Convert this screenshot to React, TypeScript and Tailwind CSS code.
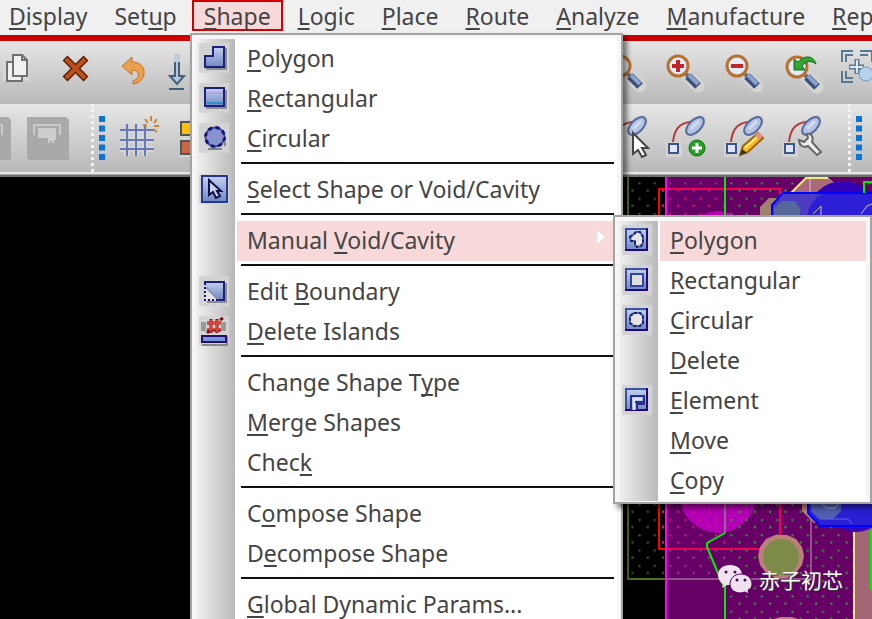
import type { ReactNode } from 'react'
import clsx from 'clsx'

type Item = { label: string; icon?: ReactNode; active?: boolean; children?: Entry[] }
type Entry = Item | 'separator'

/// Menu icons ///

function Tile({ children }: { children: ReactNode }) {
  return (
    <svg className="size-[30px] shrink-0 bg-[#d3d3d3]" viewBox="0 0 30 30" aria-hidden="true">
      <defs>
        <linearGradient id="face" x1="0" y1="0" x2="0" y2="1">
          <stop offset="0" stopColor="#c4d0ee" />
          <stop offset="1" stopColor="#7188c4" />
        </linearGradient>
      </defs>
      {children}
    </svg>
  )
}

const polygonIcon = (
  <Tile>
    <path d="M7 26h20V5" fill="none" stroke="#8c8c94" strokeWidth="2" />
    <path d="M6 13h8V4h11v20H6z" fill="url(#face)" stroke="#1c2078" strokeWidth="2" />
  </Tile>
)

const rectIcon = (
  <Tile>
    <path d="M7 25h20V7" fill="none" stroke="#8c8c94" strokeWidth="2" />
    <rect x="6" y="5" width="19" height="18" fill="url(#face)" stroke="#1c2078" strokeWidth="2" />
    <path d="M8 10h16" stroke="#b98ad8" />
    <path d="M8 20h16" stroke="#2d8fc4" strokeWidth="2" />
  </Tile>
)

const circleIcon = (
  <Tile>
    <path d="M9 26h14M26 19v4" stroke="#808088" strokeWidth="2" />
    <circle cx="16" cy="14" r="9.5" fill="#8494cc" stroke="#3c4a90" strokeWidth="2" />
    <circle cx="16" cy="14" r="9.5" fill="none" stroke="#14147a" strokeWidth="3" strokeDasharray="4 3.5" />
    <path d="M7 14h18" stroke="#a08ad0" />
  </Tile>
)

const selectIcon = (
  <Tile>
    <rect x="3" y="2" width="25" height="26" fill="url(#face)" stroke="#26388c" strokeWidth="2" />
    <path d="M10 6v15l4-3 3 6 4-2-3-5h4z" fill="#c9d0e8" stroke="#101050" strokeWidth="2" />
  </Tile>
)

const editIcon = (
  <Tile>
    <path d="M8 26h19V7" fill="none" stroke="#8c8c94" strokeWidth="2" />
    <path d="M6 6h19v17h-8L6 12z" fill="url(#face)" />
    <path d="M6 12l12 12H6z" fill="#e4e4e4" />
    <path d="M5 6h20v18h-7" fill="none" stroke="#1c2078" strokeWidth="2" />
    <path d="M6 7v17h13" fill="none" stroke="#14147a" strokeWidth="2" strokeDasharray="2 2" />
    <path d="M8 12l11 11" stroke="#8494a4" strokeWidth="2" strokeDasharray="2 1" />
  </Tile>
)

const islandsIcon = (
  <Tile>
    <path d="M2 6h5v9H2zM22 6h5v9h-5z" fill="#999" />
    <path d="M8 7h14M8 14h14M12 3v14M18 3v14M8 17l3-3M21 4l3-2" stroke="#7c1818" strokeWidth="3" />
    <path d="M8 7h14M8 13h14M12 4v12M18 4v12" stroke="#d84438" strokeWidth="2" />
    <path d="M3 29h25v-9" fill="none" stroke="#888" strokeWidth="2" />
    <rect x="3" y="20" width="24" height="6" fill="#7898e0" stroke="#26106e" strokeWidth="2" />
  </Tile>
)

function VoidTile({ children }: { children: ReactNode }) {
  return (
    <Tile>
      <rect x="4" y="4" width="21" height="21" fill="url(#face)" stroke="#3a50a0" strokeWidth="2" />
      <path d="M25 3v22H3" fill="none" stroke="#200a78" strokeWidth="2" />
      {children}
    </Tile>
  )
}

const voidPolygonIcon = (
  <VoidTile>
    <path d="M8 12l4-3 2-2h4l2 3 1 2v6l-2 3-4 1-2-2v-4H9z" fill="#e4e4e4" stroke="#5468a8" strokeWidth="2" />
    <path d="M8 12l4-3 2-2h4l2 3 1 2v6l-2 3-4 1-2-2v-4H9z" fill="none" stroke="#182070" strokeWidth="2" strokeDasharray="3 2" />
  </VoidTile>
)

const voidRectIcon = (
  <VoidTile>
    <rect x="9" y="9" width="12" height="12" fill="#e0e0e0" stroke="#34469a" strokeWidth="2" />
  </VoidTile>
)

const voidCircleIcon = (
  <VoidTile>
    <path d="M12 8h6l3 3v7l-3 3h-6l-4-3v-7z" fill="#e4e4e4" stroke="#5468a8" strokeWidth="2" />
    <path d="M12 8h6l3 3v7l-3 3h-6l-4-3v-7z" fill="none" stroke="#182070" strokeWidth="2" strokeDasharray="3 2" />
  </VoidTile>
)

const voidElementIcon = (
  <VoidTile>
    <path d="M9 25V11h13v8h-7v6" fill="none" stroke="#24308c" strokeWidth="2" />
    <path d="M12 25V14h8" fill="none" stroke="#dfe4f0" strokeWidth="3" />
    <path d="M13 17h8" stroke="#24308c" strokeWidth="2" />
  </VoidTile>
)

/// Menu data, the underlined letter follows "&" ///

const menuBar = ['&Display', 'Set&up', '&Shape', '&Logic', '&Place', '&Route', '&Analyze', '&Manufacture', '&Report']

const voidMenu: Entry[] = [
  { label: '&Polygon', icon: voidPolygonIcon, active: true },
  { label: '&Rectangular', icon: voidRectIcon },
  { label: '&Circular', icon: voidCircleIcon },
  { label: '&Delete' },
  { label: '&Element', icon: voidElementIcon },
  { label: '&Move' },
  { label: '&Copy' },
]

const shapeMenu: Entry[] = [
  { label: '&Polygon', icon: polygonIcon },
  { label: '&Rectangular', icon: rectIcon },
  { label: '&Circular', icon: circleIcon },
  'separator',
  { label: '&Select Shape or Void/Cavity', icon: selectIcon },
  'separator',
  { label: 'Manual &Void/Cavity', active: true, children: voidMenu },
  'separator',
  { label: 'Edit &Boundary', icon: editIcon },
  { label: '&Delete Islands', icon: islandsIcon },
  'separator',
  { label: 'Change Shape T&ype' },
  { label: '&Merge Shapes' },
  { label: 'Chec&k' },
  'separator',
  { label: 'C&ompose Shape' },
  { label: 'D&ecompose Shape' },
  'separator',
  { label: '&Global Dynamic Params...' },
]

function Mnemonic({ text }: { text: string }) {
  const [before, after] = text.split('&')
  return (
    <>
      {before}
      <u className="decoration-[2px] underline-offset-[3px] [text-decoration-skip-ink:none]">{after[0]}</u>
      {after.slice(1)}
    </>
  )
}

function Menu({ entries, className }: { entries: Entry[]; className: string }) {
  return (
    <div className={clsx('absolute border-2 border-[#a3a3a3] bg-[#f6f6f6] px-1 pt-1 pb-px shadow-[4px_4px_5px_rgba(0,0,0,0.5)]', className)}>
      <ul role="menu" className="bg-[linear-gradient(to_right,#f0f0f0,#b9b9b9_39px,#fff_39px)]">
        {entries.map((entry, i) =>
          entry === 'separator' ? (
            <li key={i} role="separator" className="flex h-[11px] items-center pr-[3px] pb-1 pl-[45px]">
              <span className="h-[2px] w-full bg-[#111]" />
            </li>
          ) : (
            <li key={i} role="none" className="relative">
              <button type="button" role="menuitem" className="flex h-10 w-full items-center gap-[5px] text-left">
                <span className="flex w-9 shrink-0 justify-center pb-0.5">{entry.icon}</span>
                <span className={clsx('flex h-10 flex-1 items-center justify-between px-[10px] pb-0.5 whitespace-nowrap', entry.active && 'bg-[#f8d9d9]')}>
                  <span>
                    <Mnemonic text={entry.label} />
                  </span>
                  {entry.children && (
                    <svg className="mr-[2px] mb-1.5 h-3.5 w-2" viewBox="0 0 8 14" aria-hidden="true">
                      <path d="M0 0l8 7-8 7z" fill="#fff" />
                    </svg>
                  )}
                </span>
              </button>
              {entry.children && <Menu entries={entry.children} className="-top-1.5 left-full z-10 -ml-1 w-[259px]" />}
            </li>
          ),
        )}
      </ul>
    </div>
  )
}

/// Toolbar ///

function Tool({ label, narrow, children }: { label: string; narrow?: boolean; children: ReactNode }) {
  return (
    <button type="button" aria-label={label} className={clsx('flex shrink-0 items-center justify-center', narrow ? 'w-[30px]' : 'w-[58px]')}>
      <svg className="size-10 shrink-0 overflow-visible" viewBox="0 0 40 40" fill="none">
        {children}
      </svg>
    </button>
  )
}

function Lens({ x = 13, y = 16, children }: { x?: number; y?: number; children?: ReactNode }) {
  return (
    <>
      <path d={`M${x + 10} ${y + 10}L${x + 20} ${y + 20}`} stroke="#d4d4d4" strokeWidth="13" strokeLinecap="round" />
      <path d={`M${x + 8} ${y + 8}l4 4`} stroke="#6a6f80" strokeWidth="4" />
      <path d={`M${x + 10} ${y + 10}l10 10`} stroke="#3d5078" strokeWidth="8" />
      <path d={`M${x + 11} ${y + 9}l9 9`} stroke="#8ba3cf" strokeWidth="4" />
      <circle cx={x} cy={y} r="10" fill="#e3eaf8" stroke="#b8702c" strokeWidth="3" />
      {children}
    </>
  )
}

function Via({ children }: { children: ReactNode }) {
  return (
    <>
      <ellipse cx="28" cy="8" rx="13" ry="8" transform="rotate(-45 28 8)" fill="#d4d4d4" />
      <path d="M-1 24h16v15H-1z" fill="#d4d4d4" />
      <path d="M6 24C7 12 13 5 23 4" stroke="#b23c3c" strokeWidth="2" />
      <ellipse cx="28" cy="8" rx="11" ry="6" transform="rotate(-45 28 8)" fill="#b4c3e4" stroke="#566a9c" strokeWidth="2" />
      <path d="M24 11l8-8" stroke="#d0daf0" strokeWidth="3" />
      <rect x="2" y="26" width="9" height="9" fill="#dfe6f8" stroke="#3d548c" strokeWidth="2" />
      {children}
    </>
  )
}

function Handle() {
  return (
    <span className="mx-[5px] flex shrink-0 gap-[5px]">
      <span className="border-l-[3px] border-dotted border-[#f4f4f4]" />
      <svg className="w-[6px] self-center" viewBox="0 0 6 44" aria-hidden="true">
        <path d="M3 0v44" stroke="#0a74da" strokeWidth="6" strokeDasharray="6 3.5" />
      </svg>
    </span>
  )
}

function DisabledSave() {
  return (
    <>
      <path d="M0 -1h39l3 3v40H2l-2-2z" fill="#a9a9a9" />
      <path d="M7 17V7h26v10" stroke="#c9c9c9" strokeWidth="2" />
      <path d="M11 10h18v12h-2v3h-2v-2h-2v2h-2v-5H11z" fill="#cdcdcd" />
    </>
  )
}

function Toolbars() {
  return (
    <div className="bg-[#bdbdbd]">
      <div className="-ml-3 flex h-[63px] overflow-hidden bg-linear-to-b from-[#e6e6e6] to-[#b9b9b9] pb-[5px]">
        <Tool label="Copy">
          <path d="M6 9h26v22H6z" fill="#d8d8d8" />
          <path d="M10 12h7v14h8v5H10z" fill="#f0f0f0" stroke="#707070" strokeWidth="2" />
          <path d="M16 5h9l5 5v16H16z" fill="#f0f0f0" stroke="#707070" strokeWidth="2" />
          <path d="M25 5v5h5" stroke="#707070" strokeWidth="2" />
        </Tool>
        <Tool label="Delete">
          <path d="M10 8l21 21M31 8L10 29" stroke="#5e1c06" strokeWidth="7" />
          <path d="M11 9l19 19M30 9L11 28" stroke="#c05018" strokeWidth="4" />
        </Tool>
        <Tool label="Undo">
          <path d="M9 16l10-9v5c8 0 13 5 12 12-1 6-5 9-11 10v-3c5-2 6-5 5-8-1-2-3-3-6-3v5z" fill="#e8a050" stroke="#c27328" />
        </Tool>
        <Tool label="Step" narrow>
          <path d="M18 8v18h-5l7 8 7-8h-5V8" fill="#b8c8d8" stroke="#42607e" strokeWidth="2" />
          <path d="M17 4h6v8h-6z" fill="#c2ccd6" />
          <path d="M12 39h15" stroke="#42607e" strokeWidth="2" />
        </Tool>
        <div className="w-[406px] shrink-0" />
        <Tool label="Zoom fit">
          <Lens>
            <path d="M13 11v11" stroke="#c22828" strokeWidth="4" />
          </Lens>
        </Tool>
        <Tool label="Zoom in">
          <Lens>
            <path d="M13 10v12M7 16h12" stroke="#c22828" strokeWidth="4" />
          </Lens>
        </Tool>
        <Tool label="Zoom out">
          <Lens x={14}>
            <path d="M8 16h12" stroke="#c22828" strokeWidth="4" />
          </Lens>
        </Tool>
        <Tool label="Zoom previous">
          <Lens x={16} y={17}>
            <path d="M13 9v11h11l-3-4c4-5 8-6 14-2-2-8-11-10-18-2z" fill="#35a535" stroke="#126c18" />
          </Lens>
        </Tool>
        <Tool label="Zoom to selection">
          <path d="M3 12V1h11M7 12V5h7M21 1h12M21 5h8M3 21v11h11M7 21v7h7M33 1v11" stroke="#587994" strokeWidth="2" />
          <path d="M18 9v15M10 17h15" stroke="#587994" strokeWidth="5" />
          <path d="M18 10v13M11 17h13" stroke="#dfe8f0" strokeWidth="2" />
          <circle cx="27" cy="24" r="7" fill="#b6d2ec" stroke="#7299bd" />
        </Tool>
      </div>
      <div className="-ml-10 flex h-[68px] overflow-hidden bg-linear-to-b from-[#e6e6e6] to-[#b9b9b9]">
        <Tool label="Save layout">
          <DisabledSave />
        </Tool>
        <Tool label="Save screen">
          <DisabledSave />
        </Tool>
        <div className="w-[10px] shrink-0" />
        <Handle />
        <Tool label="Grid">
          <path d="M8 6v32M17 6v32M26 6v32M1 12h34M1 22h34M1 31h34" stroke="#d4d4d4" strokeWidth="6" />
          <path d="M8 6v32M17 6v32M26 6v32M1 12h34M1 22h34M1 31h34" stroke="#6679b4" strokeWidth="2" />
          <path d="M32 3v-5M35 5l3-4M35 8h5M34 11l4 3M29 5l-3-4M28 8l-4-1" stroke="#c8843a" strokeWidth="2" />
        </Tool>
        <Tool label="Colors">
          <path d="M3 2h16v37H3z" fill="#d4d4d4" />
          <rect x="4" y="4" width="14" height="13" fill="#fcc010" stroke="#555" strokeWidth="2" />
          <rect x="4" y="23" width="14" height="13" fill="#cc6644" stroke="#555" strokeWidth="2" />
        </Tool>
        <div className="w-[374px] shrink-0" />
        <Tool label="Select connection">
          <Via>
            <path d="M24 15v21l5-4 4 7 4-2-4-7h6z" fill="#fff" stroke="#444" strokeWidth="2" />
          </Via>
        </Tool>
        <Tool label="Add connection">
          <Via>
            <circle cx="30" cy="30" r="8" fill="#25a025" stroke="#147014" />
            <path d="M30 25v10M25 30h10" stroke="#fff" strokeWidth="3" />
          </Via>
        </Tool>
        <Tool label="Edit connection">
          <Via>
            <path d="M15 37l3-9 15-13 5 5-15 14z" fill="#f4b81c" stroke="#9a6410" strokeWidth="2" />
            <path d="M20 30l14-13" stroke="#fff07c" strokeWidth="2" />
            <path d="M30 17l4-3 4 4-4 4z" fill="#e09080" />
            <path d="M15 37l2-6 5 4z" fill="#333" />
          </Via>
        </Tool>
        <Tool label="Connection settings">
          <Via>
            <path d="M24 16l1 4-4 4-5-2c0 6 5 8 9 6l9 9 4-3-9-10c2-5-1-9-5-8z" fill="#eee" stroke="#666" strokeWidth="2" />
          </Via>
        </Tool>
        <div className="w-[11px] shrink-0" />
        <Handle />
      </div>
      <div className="h-[5px] border-t-2 border-b-2 border-t-[#e8e8e8] border-b-[#707070] bg-[#a8a8a8]" />
    </div>
  )
}

/// Board view ///

function Board() {
  return (
    <svg className="size-full" viewBox="0 177 872 442" preserveAspectRatio="xMinYMin slice" aria-label="Board layout" role="img">
      <defs>
        <g id="dots">
          <path d="M10 6h2v2h-2zM3 13h2v2H3z" />
        </g>
        <pattern id="dots-olive" x="628.5" y="176.5" width="15.3" height="15.3" patternUnits="userSpaceOnUse">
          <use href="#dots" fill="#41651f" />
        </pattern>
        <pattern id="dots-pink" x="628.5" y="176.5" width="15.3" height="15.3" patternUnits="userSpaceOnUse">
          <use href="#dots" fill="#e01c78" />
        </pattern>
        <pattern id="dots-grey" x="628.5" y="176.5" width="15.3" height="15.3" patternUnits="userSpaceOnUse">
          <use href="#dots" fill="#8a4c8a" />
        </pattern>
        <pattern id="dots-green" x="628.5" y="176.5" width="15.3" height="15.3" patternUnits="userSpaceOnUse">
          <use href="#dots" fill="#2fa42f" />
        </pattern>
      </defs>
      <path d="M666 177h206v442H666z" fill="#660066" />
      <circle cx="718" cy="249" r="38" fill="#b400b4" />
      <circle cx="718" cy="495" r="38" fill="#b400b4" />
      <path d="M628 177h38v402h-38z" fill="url(#dots-olive)" />
      <path d="M666 177h59v12h-59zM666 549h59v30h-59z" fill="url(#dots-grey)" />
      <path d="M660 190h65v359h-65z" fill="url(#dots-pink)" />
      <path d="M725 177h147v442H725z" fill="url(#dots-green)" />
      <g fill="none" strokeWidth="2">
        <path d="M628 177v402h38" stroke="#4b7028" />
        <path d="M666 579h145v-62" stroke="#94518b" />
        <path d="M666 189h-7v360h7" stroke="#ff0000" />
        <path d="M666 189h114v360H666" stroke="#f00050" />
        <path d="M666 177v442" stroke="#ff00ff" />
        <path d="M725 500v33" stroke="#8e6a8e" />
        <path d="M725 177v40M725 533l-18 10v4l15 36 3 4v32" stroke="#00f000" />
      </g>
      <path d="M775 535h12l9 4 6 8 2 9-2 9-6 8-9 5h-12l-9-5-6-8-2-9 2-9 6-8z" fill="#b98078" />
      <circle cx="781" cy="557" r="18" fill="#7c8c48" />
      <path d="M774 619l6-2h12l6 2z" fill="#b98078" />

      <path d="M790 194l16-16h22l18 16z" fill="#a86a78" />
      <path d="M790 194l16-16h22" fill="none" stroke="#f4e880" strokeWidth="2" />
      <path d="M828 178l16 14" stroke="#b8a8b8" />
      <path d="M810 179v14" stroke="#c890a0" strokeWidth="2" />
      <path d="M760 220v-13l9-9h22l9 9v13z" fill="#a0826c" />
      <circle cx="843" cy="217" r="36" fill="#3400b4" />
      <path d="M772 220v-15l11-12h89v27z" fill="#4c3cc4" />
      <path d="M774 220v-12l8-7h12l6 7v12z" fill="#55689c" />
      <path d="M807 220c0-12 6-21 15-26h50v26z" fill="#2d1ed8" />
      <path d="M872 193h-89l-11 12v14" fill="none" stroke="#0000ff" strokeWidth="2" />
      <path d="M813 214l8-8v12M861 214l6-8 5-2" fill="none" stroke="#c8c8d8" />
      <path d="M872 182h-8v11" fill="none" stroke="#00f000" strokeWidth="2" />

      <path d="M855 526h17v93h-17z" fill="#a26674" />
      <path d="M854 532v87" stroke="#f4e880" strokeWidth="2" />
      <path d="M871 530v60" stroke="#00f000" strokeWidth="2" />
      <path d="M802 500v11l12 12h6v-23z" fill="#b98078" />
      <circle cx="856" cy="502" r="30" fill="#3a06b8" />
      <path d="M808 500v13l12 13h52v-26z" fill="#2b1fd6" />
      <path d="M811 500v11l8 8h14l8-8v-11z" fill="#5060b0" />
      <path d="M823 504l3 4h9l3-4" fill="none" stroke="#a0acd8" />
      <path d="M820 519h28l4 5" fill="none" stroke="#6068e8" />
      <path d="M808 500v13l12 13h52" fill="none" stroke="#0000ff" strokeWidth="2" />
    </svg>
  )
}

function Watermark() {
  return (
    <div className="absolute right-[29px] bottom-6 flex items-center gap-1.5 text-[21px] leading-[30px] text-white [text-shadow:1px_1px_1px_#333]">
      <svg className="h-[30px] w-[35px]" viewBox="0 0 35 30" aria-hidden="true">
        <path d="M12 0C5 0 0 4 0 10c0 4 2 7 5 9l-1 4 5-3h5C24 20 24 12 24 10 24 4 19 0 12 0z" fill="#efe3ef" />
        <circle cx="8" cy="7" r="1.5" fill="#5a005a" />
        <circle cx="17" cy="7" r="1.5" fill="#5a005a" />
        <path d="M23 9c-6 0-11 4-11 10s5 9 11 9l4-1 4 2-1-4c3-1 4-4 4-6 0-6-5-10-11-10z" fill="#efe3ef" stroke="#5a005a" />
        <circle cx="19" cy="15" r="1.5" fill="#5a005a" />
        <circle cx="27" cy="15" r="1.5" fill="#5a005a" />
      </svg>
      <span>赤子初芯</span>
    </div>
  )
}

export default function App() {
  return (
    <div className="relative flex h-screen flex-col overflow-hidden bg-black font-['Noto_Sans','Noto_Sans_CJK_SC',sans-serif] text-[23px] leading-[30px] text-[#444]">
      <nav className="flex h-[35px] shrink-0 items-start overflow-hidden bg-[#f0f0f0]">
        <div className="-ml-[3px] flex gap-[3px]">
          {menuBar.map((label) => (
            <button
              key={label}
              type="button"
              className={clsx('h-[31px] border-2 px-[10px] leading-[28px]', label === '&Shape' ? 'border-[#d40000] bg-[#f8d9d9]' : 'border-transparent')}
            >
              <Mnemonic text={label} />
            </button>
          ))}
        </div>
      </nav>
      <div className="h-[6px] shrink-0 bg-[#cc0000]" />
      <Toolbars />
      <main className="min-h-0 flex-1">
        <Board />
      </main>
      <Watermark />
      <Menu entries={shapeMenu} className="top-[33px] left-[190px] w-[433px]" />
    </div>
  )
}
